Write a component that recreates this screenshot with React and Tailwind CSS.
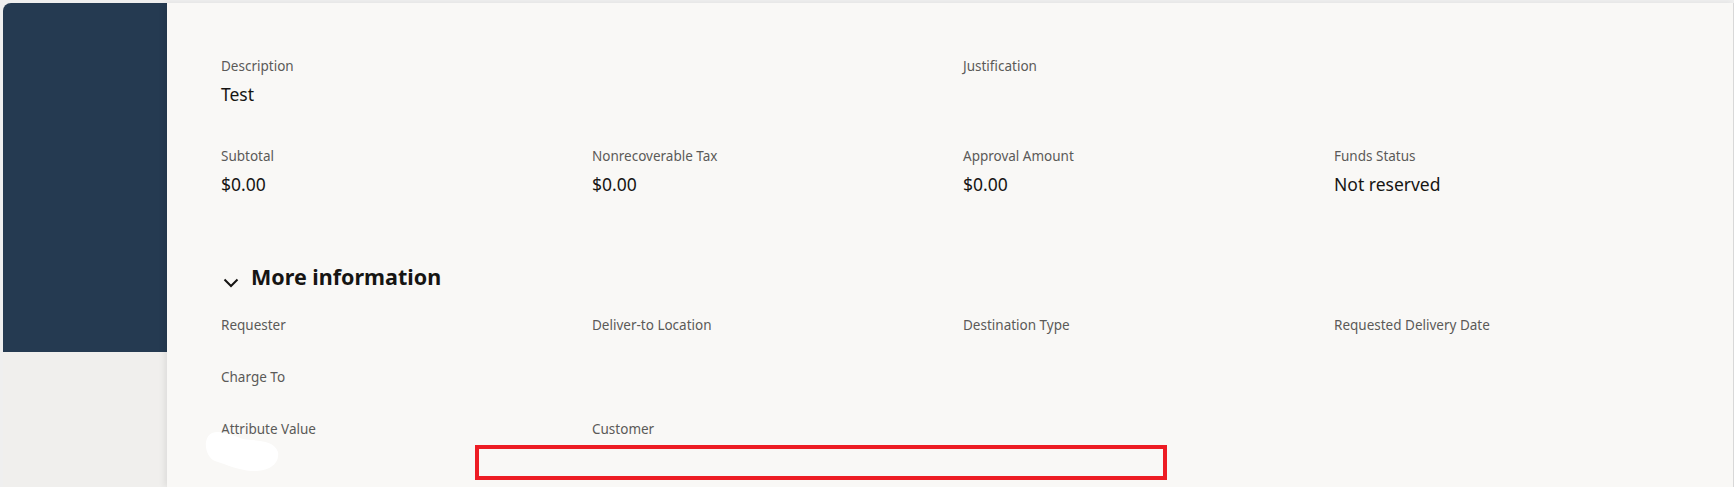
import React from "react";

// Label + optional value pair
function Field({ label, value }) {
  return (
    <div className="flex flex-col">
      <div className="text-[13.5px] leading-[20px] text-[#5b5a58]">{label}</div>
      {value && (
        <div className="mt-[6px] text-[17.5px] leading-[24px] text-[#161513]">{value}</div>
      )}
    </div>
  );
}

const cols = "grid grid-cols-[371px_371px_371px_1fr]";

export default function App() {
  return (
    <div className="flex h-[487px] w-full overflow-hidden bg-[#efefef] pl-[3px] pt-[3px] font-['Noto_Sans',sans-serif]">
      {/* Left rail */}
      <div className="flex w-[164px] shrink-0 flex-col">
        <div className="h-[349px] rounded-tl-lg bg-[#253a51]" />
        <div className="flex-1 bg-[#f0efed]" />
      </div>

      {/* Detail card */}
      <div className="relative z-10 flex-1 border-r border-[#d8d8d8] bg-[#f9f8f6] pl-[54px] pt-[53px] shadow-[-3px_0_6px_rgba(0,0,0,0.07)]">
        <div className={cols}>
          <Field label="Description" value="Test" />
          <div />
          <Field label="Justification" />
          <div />
        </div>

        <div className={`${cols} mt-[40px]`}>
          <Field label="Subtotal" value="$0.00" />
          <Field label="Nonrecoverable Tax" value="$0.00" />
          <Field label="Approval Amount" value="$0.00" />
          <Field label="Funds Status" value="Not reserved" />
        </div>

        <div className="mt-[67px] flex items-start">
          <svg
            className="ml-[2px] mr-[12px] mt-[15px]"
            width="16"
            height="10"
            viewBox="0 0 16 10"
            fill="none"
          >
            <path d="M1.5 1.5 L8 8 L14.5 1.5" stroke="#161513" strokeWidth="2" />
          </svg>
          <h2 className="text-[21.5px] font-bold leading-[28px] text-[#161513]">More information</h2>
        </div>

        <div className={`${cols} mt-[24px] gap-y-[32px]`}>
          <Field label="Requester" />
          <Field label="Deliver-to Location" />
          <Field label="Destination Type" />
          <Field label="Requested Delivery Date" />
          <Field label="Charge To" />
          <div />
          <div />
          <div />
          <Field label="Attribute Value" />
          <Field label="Customer" />
        </div>

        {/* redaction smudge */}
        <svg
          className="absolute left-[36px] top-[427px]"
          width="76"
          height="42"
          viewBox="0 0 76 42"
        >
          <path
            d="M9 3 C18 0 28 5 40 9 C52 11 71 9 75 22 C77 36 63 42 48 41 C36 40 24 35 12 31 C2 27 -1 8 9 3 Z"
            fill="#ffffff"
          />
        </svg>

        {/* red annotation box */}
        <div className="absolute left-[308px] top-[442px] h-[35px] w-[692px] border-[4px] border-[#ed1c24]" />
      </div>
    </div>
  );
}
